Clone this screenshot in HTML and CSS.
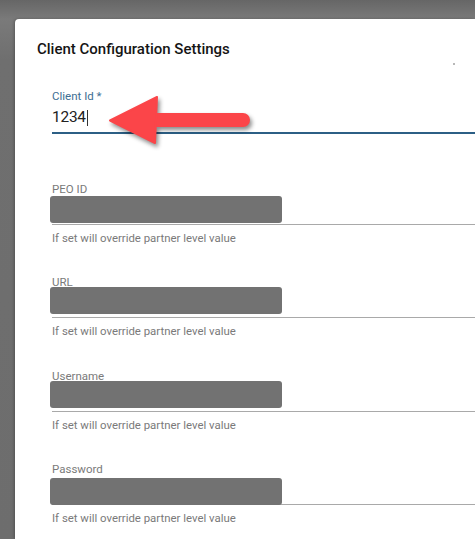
FILE: index.html
```html
<!DOCTYPE html>
<html lang="en">
<head>
<meta charset="utf-8">
<title>Client Configuration Settings</title>
<link rel="stylesheet" href="styles.css">
</head>
<body>
<div class="dialog">
  <h2 class="title">Client Configuration Settings</h2>
  <span class="dot"></span>

  <div class="field field-focused">
    <label class="label">Client Id *</label>
    <div class="input-area"><span class="value">1234</span><span class="caret"></span></div>
  </div>

  <div class="field field-first">
    <label class="label">PEO ID</label>
    <div class="input-area"><span class="redact redact-peo"></span></div>
    <div class="hint">If set will override partner level value</div>
  </div>

  <div class="field">
    <label class="label">URL</label>
    <div class="input-area"><span class="redact redact-up"></span></div>
    <div class="hint">If set will override partner level value</div>
  </div>

  <div class="field">
    <label class="label">Username</label>
    <div class="input-area"><span class="redact redact-up"></span></div>
    <div class="hint">If set will override partner level value</div>
  </div>

  <div class="field">
    <label class="label">Password</label>
    <div class="input-area"><span class="redact redact-down"></span></div>
    <div class="hint">If set will override partner level value</div>
  </div>

  <svg class="arrow" viewBox="0 0 170 85" width="170" height="85">
    <line x1="45" y1="31" x2="138" y2="31" stroke="#fb4549" stroke-width="14" stroke-linecap="round"/>
    <polygon points="5,31.5 52,8 50,54" fill="#fb4549" stroke="#fb4549" stroke-width="2" stroke-linejoin="round"/>
  </svg>
</div>
</body>
</html>
```

FILE: styles.css
```css
html, body {
  margin: 0;
  padding: 0;
}

body {
  width: 475px;
  height: 539px;
  overflow: hidden;
  font-family: Roboto, "Liberation Sans", sans-serif;
  background: linear-gradient(to bottom, #666666 0px, #7a7a7a 19px, #6f6f6f 60px, #6d6d6d 100%);
}

.dialog {
  position: relative;
  margin: 19px 0 0 15px;
  padding: 20px 0 0 22px;
  height: 520px;
  box-sizing: border-box;
  background: #ffffff;
  border-radius: 4px 0 0 0;
  box-shadow: -1px 0 3px rgba(0, 0, 0, 0.25);
  overflow: hidden;
}

.title {
  margin: 0;
  font-size: 15px;
  line-height: 20px;
  font-weight: 500;
  color: #151515;
}

.dot {
  position: absolute;
  left: 438px;
  top: 44px;
  width: 2px;
  height: 2px;
  border-radius: 1px;
  background: #a0a0a0;
}

.field {
  margin: 30.3px 0 0 15px;
}

.field-focused {
  margin-top: 30px;
}

.field-first {
  margin-top: 48px;
}

.label {
  display: block;
  font-size: 11.5px;
  line-height: 14px;
  color: #7a7a7a;
}

.field-focused .label {
  color: #3d6e93;
}

.input-area {
  position: relative;
  height: 29px;
  box-sizing: border-box;
  border-bottom: 1px solid #a9a9a9;
}

.field-focused .input-area {
  height: 31px;
  padding-top: 4px;
  border-bottom: 2px solid #2c5f85;
}

.value {
  font-size: 15.4px;
  line-height: 20px;
  color: #222222;
  letter-spacing: -0.2px;
}

.caret {
  display: inline-block;
  width: 1px;
  height: 16px;
  margin-left: 1px;
  vertical-align: -4px;
  background: #333333;
}

.redact {
  position: absolute;
  left: -2px;
  top: 0;
  width: 232px;
  height: 27px;
  border-radius: 3px;
  background: #727272;
}

.redact-up {
  top: -2px;
}

.redact-down {
  top: 2px;
}

.hint {
  margin-top: 6px;
  font-size: 11.4px;
  line-height: 14px;
  color: #7a7a7a;
}

.arrow {
  position: absolute;
  left: 90px;
  top: 70px;
  overflow: visible;
  pointer-events: none;
  filter: drop-shadow(2px 3px 2px rgba(0, 0, 0, 0.45));
}
```
